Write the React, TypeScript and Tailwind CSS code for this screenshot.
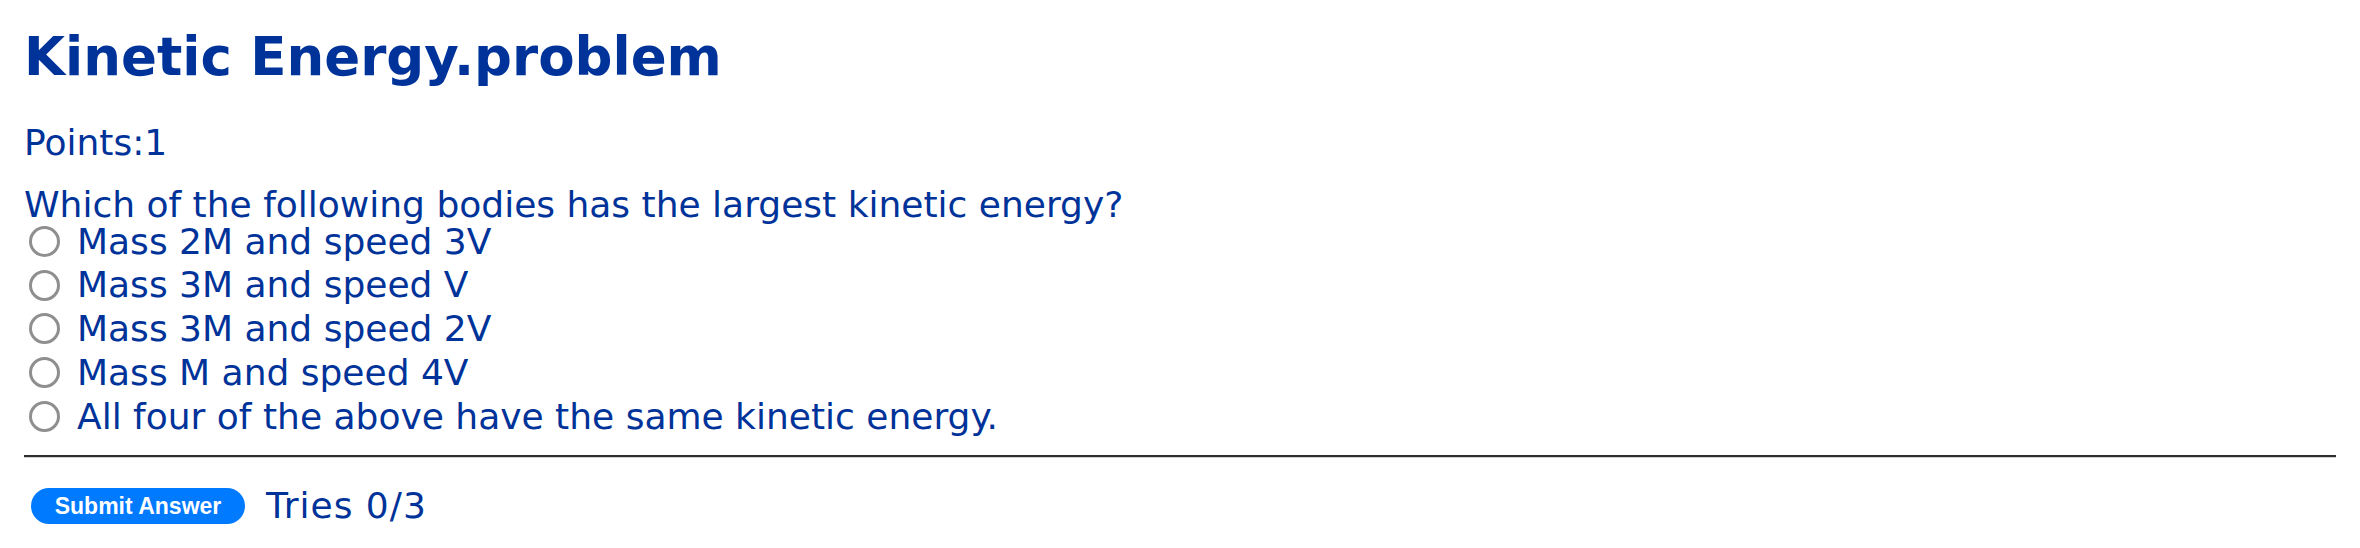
import { useState } from "react"

const options = [
  "Mass 2M and speed 3V",
  "Mass 3M and speed V",
  "Mass 3M and speed 2V",
  "Mass M and speed 4V",
  "All four of the above have the same kinetic energy.",
]

export default function App() {
  const [picked, setPicked] = useState<number | null>(null)

  return (
    <div className="min-h-screen bg-white px-6 pt-[25px] font-['DejaVu_Sans',sans-serif] text-[#003399]">
      <h1 className="text-[53px] font-bold leading-[63px]">Kinetic Energy.problem</h1>

      <p className="mt-[36.5px] text-[36px] leading-[36px]">Points:1</p>

      <p className="mt-[29px] text-[36px] leading-[30px]">
        Which of the following bodies has the largest kinetic energy?
      </p>

      <div className="flex flex-col">
        {options.map((opt, i) => (
          <label key={i} className="flex h-[43.75px] items-center text-[36px] leading-[43.75px]">
            <input
              type="radio"
              name="answer"
              checked={picked === i}
              onChange={() => setPicked(i)}
              className="ml-[4.5px] mr-[17.5px] h-[31px] w-[31px] shrink-0 appearance-none rounded-full border-[3px] border-[#8f8f8f] bg-white checked:border-[9px] checked:border-[#007aff]"
            />
            <span>{opt}</span>
          </label>
        ))}
      </div>

      <hr className="mt-[17px] h-0 border-0 border-t-2 border-b border-t-[#2e2e2e] border-b-[#cfcfcf]" />

      <div className="ml-[7px] mt-[27px] flex items-center gap-[21px]">
        <button className="flex h-[36px] w-[214px] items-center justify-center rounded-full bg-[#007aff] font-['Liberation_Sans',Arial,sans-serif] text-[23px] font-bold text-white">
          Submit Answer
        </button>
        <span className="text-[36px] leading-[42px] tracking-[1px]">Tries 0/3</span>
      </div>
    </div>
  )
}
